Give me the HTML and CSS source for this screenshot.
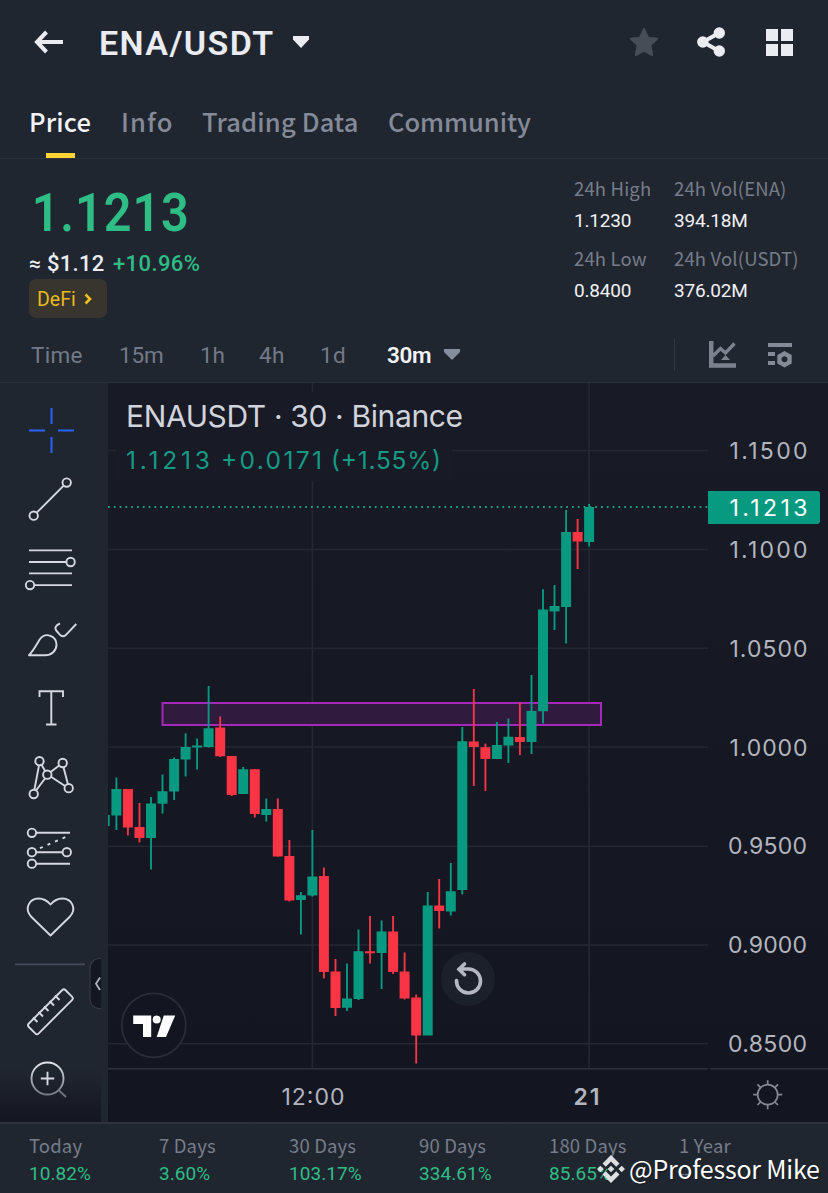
FILE: index.html
```html
<!DOCTYPE html>
<html lang="en">
<head>
<meta charset="utf-8">
<title>ENA/USDT</title>
<link rel="stylesheet" href="styles.css">
</head>
<body>
<div class="app">
  <header class="header">
    <svg class="back" width="30" height="24" viewBox="0 0 30 24"><path d="M12.500 2 3 12l9.500 10M3 12h26" fill="none" stroke="#eaecf2" stroke-width="4"/></svg>
    <h1 class="pair">ENA/USDT</h1>
    <svg class="caret" width="16" height="12" viewBox="0 0 16 12"><path d="M0 0h16v3.500L8 12 0 3.500z" fill="#eaecf2"/></svg>
    <div class="actions">
      <svg width="30" height="30" viewBox="0 0 30 30"><path d="M15 2l4 8.700 9 1-6.600 6.400 1.800 9.900L15 23.500 6.800 28l1.800-9.900L2 11.700l9-1z" fill="#474d57" stroke="#474d57" stroke-width="2" stroke-linejoin="round"/></svg>
      <svg width="28" height="30" viewBox="0 0 28 30"><path d="M22 6 6 15l16 9" fill="none" stroke="#eaecf2" stroke-width="4"/><circle cx="22.300" cy="6" r="5.700" fill="#eaecf2"/><circle cx="5.800" cy="15" r="5.700" fill="#eaecf2"/><circle cx="22.300" cy="24" r="5.700" fill="#eaecf2"/></svg>
      <svg width="27" height="27" viewBox="0 0 27 27"><path d="M0 0h12v12H0zM15 0h12v12H15zM0 15h12v12H0zM15 15h12v12H15z" fill="#eaecf2"/></svg>
    </div>
  </header>

  <nav class="tabs">
    <a class="tab tab-active">Price</a>
    <a class="tab tab-info">Info</a>
    <a class="tab tab-data">Trading Data</a>
    <a class="tab tab-community">Community</a>
  </nav>

  <section class="summary">
    <div class="quote">
      <div class="last-price">1.1213</div>
      <div class="fiat"><span class="approx">≈</span><span class="usd">$1.12</span><span class="change">+10.96%</span></div>
      <a class="tag">DeFi<svg width="8" height="12" viewBox="0 0 8 12"><path d="M1.500 1.500 6 6l-4.500 4.500" fill="none" stroke="#f0c020" stroke-width="2.600"/></svg></a>
    </div>
    <dl class="stats">
      <div><dt>24h High</dt><dd>1.1230</dd></div>
      <div><dt>24h Vol(ENA)</dt><dd>394.18M</dd></div>
      <div><dt>24h Low</dt><dd>0.8400</dd></div>
      <div><dt>24h Vol(USDT)</dt><dd>376.02M</dd></div>
    </dl>
  </section>

  <nav class="intervals">
    <span class="i-time">Time</span><span class="i-15m">15m</span><span class="i-1h">1h</span><span class="i-4h">4h</span><span class="i-1d">1d</span>
    <span class="i-30m">30m</span>
    <svg width="16" height="11" viewBox="0 0 16 11"><path d="M0 0h16v3L8 11 0 3z" fill="#848e9c"/></svg>
    <div class="chart-tools">
      <svg width="27" height="27" viewBox="0 0 27 27"><path d="M2.200 0v24.500H27" fill="none" stroke="#7c838f" stroke-width="4.500"/><path d="M4 15l7.500-7.500 5 4.500L25.500 2.500" fill="none" stroke="#7c838f" stroke-width="3.400"/><path d="M12 19h9l-4.500-5z" fill="#7c838f"/></svg>
      <svg width="24" height="26" viewBox="0 0 24 26"><path d="M0 1h24v4H0zM0 10h7v4H0zM0 19h7v4H0z" fill="#848b97"/><path fill-rule="evenodd" d="M16.500 9l7.200 4v8.500l-7.200 4-7.200-4V13zm0 5.200a3 3 0 1 0 .01 0z" fill="#848b97"/></svg>
    </div>
  </nav>

  <main class="workspace">
    <aside class="toolbar">
      <svg width="101" height="739" viewBox="0 383 101 739">
        <defs><linearGradient id="fade" x1="0" y1="0" x2="0" y2="1"><stop offset="0" stop-color="#202630"/><stop offset="1" stop-color="#141621"/></linearGradient>
        <linearGradient id="lens" x1="0" y1="0" x2="0" y2="1"><stop offset="0" stop-color="#e2e5ec"/><stop offset="1" stop-color="#777b86"/></linearGradient></defs>
        <rect y="1068" width="101" height="54" fill="url(#fade)"/>
        <path d="M51.500 408v16M51.500 437v16M29 430.500h16M58 430.500h16" stroke="#2962ff" stroke-width="2"/>
        <g fill="none" stroke="#d5d8e0" stroke-width="1.900">
          <circle cx="66.700" cy="482.600" r="4.200"/><circle cx="33.700" cy="515.700" r="4.200"/><path d="M63.700 485.600 36.700 512.700"/>
          <path d="M29 550.400h43M29 562h37.500M29 573.400h43M34 585.100h38"/><circle cx="70.600" cy="562" r="4.200"/><circle cx="30" cy="585.100" r="4.200"/>
          <path d="M29 655.200c5-5 7-10 10.500-15.500 6.500-9 17-3 17 5 0 6-5 10.500-11.500 10.500z" stroke-linejoin="round"/><path d="M60 623.500c-4.500 1.500-6 5-3 8l3.500 3.800q2.500 2 5 0L76.300 624"/>
          <path d="M39.500 697v-5.800h23.500v5.800M51.300 691.500v33M46 724.500h10.500"/>
          <circle cx="39.500" cy="761.200" r="4.200"/><circle cx="62.700" cy="763" r="4.200"/><circle cx="47.300" cy="774.700" r="4.200"/><circle cx="33.700" cy="794" r="4.200"/><circle cx="68.700" cy="788.200" r="4.200"/>
          <path d="M39 765.400l-4.600 24.400M41.700 765l3.400 6M50.600 772.100l8.600-6.500M63.500 767.200l4.400 16.800M51 776.800l14 9.200M45 778.500l-9 12"/>
          <circle cx="31.900" cy="832.800" r="4.200"/><circle cx="31.900" cy="852.200" r="4.200"/><circle cx="31.900" cy="863.700" r="4.200"/><circle cx="66.800" cy="852.200" r="4.200"/><path d="M36 832.800h34M36 852.200h26.500M36 863.700h34"/><path d="M40 848.200l27.500-12" stroke-dasharray="3 5.200"/>
          <path d="M50.500 935.500 31.500 917c-8-8.500-2-18.500 7-18.500 6 0 9 2.500 12 6 3-3.500 6-6 12-6 9 0 15 10 7 18.500z" stroke-linejoin="round"/>
          <rect x="-26" y="-7" width="52" height="14" rx="2.500" transform="translate(50.400 1011.800) rotate(-45)"/>
          <path d="M33 1017.500l4.500 4.500M38.500 1012l4.500 4.500M44 1006.500l4.500 4.500M49.500 1001l4.500 4.500M55 995.500l4.500 4.500" />
          <g stroke="url(#lens)"><circle cx="47.500" cy="1078.500" r="16"/></g><path d="M58.500 1090l7.500 7" stroke="#6f737e"/><path d="M40.800 1078.500h13.400M47.500 1071.800v13.400"/>
        </g>
        <path d="M15 964.400h70" stroke="#434a58" stroke-width="1.600"/>
        <path d="M102 958.500h-4q-8 2-8 10v30q0 8 8 10h4" fill="#141722" stroke="#343944" stroke-width="1.200"/>
        <path d="M100 977.500l-4 6.300 4 6.300" fill="none" stroke="#b2b5be" stroke-width="1.800"/>
      </svg>
    </aside>
    <div class="chart">
      <svg width="720" height="739" viewBox="108 383 720 739">
        <g stroke="#252833" stroke-width="1.600">
          <path d="M108 450.500h600M108 549.500h600M108 648.300h600M108 747h600M108 846.200h600M108 945h600M108 1043.800h600M312.400 383v685M589.100 383v685"/>
          <path d="M108 1068.700h600M710 1068.700h118" stroke="#2c303b"/>
        </g>
        <g fill="#181a25"><rect x="116" y="392" width="356" height="46"/><rect x="116" y="438" width="336" height="43"/></g>
        <path d="M108 507h600" stroke="#1f9c86" stroke-width="1.800" stroke-dasharray="1.800 4"/>
        <rect x="162.500" y="703" width="438.500" height="22" fill="#301b3f" stroke="#a428b9" stroke-width="2"/>
        <g stroke="#089981" stroke-width="1.900">
          <path d="M116.400 777.500V830M151 797v72.500M162.500 774.500v39M174.100 757.500V800M185.600 733.300v43.200M197.100 738.500v31M208.600 686v61.500M243.200 767v27M266.300 798.500v23M300.900 892v42.500M312.400 830v66.500M347 963.500v47.500M358.500 929.500v70.500M381.600 920.500V989M427.700 892v143M450.800 863v52.500M462.300 727v167.500M496.900 722v37M508.400 718.500V763M531.500 675v79M543 589.300v134.200M554.500 585v45M566.100 510v133.500M589.100 504v42.500"/>
        </g>
        <g stroke="#f23645" stroke-width="1.900">
          <path d="M127.900 789v46.500M139.500 803v39.500M220.200 716.500V757M231.700 756v40M254.800 769v48.500M277.800 798.500v58M289.400 840v61.500M323.900 867.500v111M335.500 959v57M370 916v47.500M393.100 916v58M404.600 952.500v47M416.200 994.500v69M439.200 879v49.500M473.800 689v97M485.400 743.500V791M519.900 702.500V755M577.600 519v50"/>
        </g>
        <g fill="#089981">
          <path d="M108 815h1.700v11H108zM111.400 789h10v26.500h-10zM146 803.500h10V838h-10zM157.500 791.300h10v12.400h-10zM169.100 759h10v32.500h-10zM180.600 747h10v12.500h-10zM192.100 745.600h10v1.900h-10zM203.600 728.300h10V747h-10zM238.200 769.300h10V794h-10zM261.300 809h10v6h-10zM295.900 895.300h10v4.700h-10zM307.400 876.500h10v19h-10zM342 998.500h10v9.300h-10zM353.500 951.300h10V999h-10zM376.600 931.500h10V953h-10zM422.700 905.500h10v130h-10zM445.800 891.300h10v20.200h-10zM457.300 741.300h10V890h-10zM491.900 745h10v14h-10zM503.400 736.700h10v8.800h-10zM526.500 711h10v31h-10zM538 609.500h10v101.800h-10zM549.500 606h10v5.500h-10zM561.100 532h10v75h-10zM584.100 507h10v35h-10z"/>
        </g>
        <g fill="#f93444">
          <path d="M122.900 789h10v38.500h-10zM134.500 827h10v11h-10zM215.200 727.500h10v28.800h-10zM226.700 756h10v39h-10zM249.800 769.300h10V814h-10zM272.800 809h10v47.500h-10zM284.400 856h10v44.500h-10zM318.900 876h10v96h-10zM330.500 971.500h10v36.500h-10zM365 951.300h10v1.900h-10zM388.100 931.500h10V972h-10zM399.600 971.500h10v27h-10zM411.200 997.500h10v38h-10zM434.200 905.500h10v5.500h-10zM468.800 741.500h10v5.500h-10zM480.400 747.300h10V759h-10zM514.900 737h10v5h-10zM572.600 532h10v9.500h-10z"/>
        </g>
        <g class="tv-text">
          <text x="126" y="427" class="symbol" textLength="337">ENAUSDT · 30 · Binance</text>
          <g class="delta"><text x="126" y="468.500" textLength="84">1.1213</text><text x="221" y="468.500" textLength="101">+0.0171</text><text x="331" y="468.500" textLength="110">(+1.55%)</text></g>
          <g class="ticks">
            <text x="729.500" y="458.500" textLength="78">1.1500</text><text x="729.500" y="557.500" textLength="78">1.1000</text><text x="729.500" y="656.500" textLength="78">1.0500</text><text x="729.500" y="755.500" textLength="78">1.0000</text><text x="728" y="854" textLength="79">0.9500</text><text x="728" y="953" textLength="79">0.9000</text><text x="728" y="1052" textLength="79">0.8500</text>
            <text x="281.500" y="1105" textLength="63">12:00</text><text x="573.500" y="1105" class="day">21</text>
          </g>
          <path d="M708 491h109q3 0 3 3v27q0 3-3 3H708z" fill="#089981"/>
          <text x="729.500" y="515.500" class="current" textLength="78">1.1213</text>
        </g>
        <circle cx="153.800" cy="1025.300" r="32" fill="#131521" stroke="#2a2e39" stroke-width="1.700"/>
        <path d="M133.200 1015.500h18V1037h-8.200v-13h-9.800zM163.800 1015.500h11.400L166 1037h-9.300z" fill="#fff"/><circle cx="156.700" cy="1019.500" r="4" fill="#fff"/>
        <circle cx="468" cy="979" r="27" fill="#1c202a"/>
        <path d="M456.500 980.500a12 12 0 1 0 11.500-11.500H459M464.500 964l-5.500 5.200 5.500 5.500" fill="none" stroke="#b5b8c3" stroke-width="3.600" stroke-linecap="round"/>
        <g fill="none" stroke="#858892" stroke-width="1.700"><circle cx="767.700" cy="1094.700" r="10"/><path d="M767.700 1084.700v-4.500M767.700 1104.700v4.500M757.700 1094.700h-4.500M777.700 1094.700h4.500M760.600 1087.600l-3.200-3.200M774.800 1087.600l3.200-3.200M760.600 1101.800l-3.200 3.200M774.800 1101.800l3.200 3.200"/></g>
      </svg>
    </div>
  </main>

  <footer class="performance">
    <div><span>Today</span><b>10.82%</b></div>
    <div><span>7 Days</span><b>3.60%</b></div>
    <div><span>30 Days</span><b>103.17%</b></div>
    <div><span>90 Days</span><b>334.61%</b></div>
    <div><span>180 Days</span><b>85.65%</b></div>
    <div><span>1 Year</span><b class="none">--</b></div>
    <div class="credit">
      <svg width="28" height="28" viewBox="0 0 28 28" fill="#dedfe1"><path d="M14 0l8.500 8.500-3.300 3.300L14 6.600l-5.200 5.200-3.300-3.300zM14 28l8.500-8.500-3.300-3.300-5.200 5.200-5.200-5.200-3.300 3.300zM14 10.700l3.300 3.300-3.300 3.300-3.300-3.300zM3.300 10.700L6.600 14l-3.300 3.300L0 14zM24.700 10.700L28 14l-3.300 3.300-3.300-3.300z"/></svg>
      <span>@Professor Mike</span>
    </div>
  </footer>
</div>
</body>
</html>
```

FILE: styles.css
```css
* { box-sizing: border-box; }
body { margin: 0; background: #202630; color: #eaecf2; font-family: "Noto Sans CJK SC", "Open Sans", sans-serif; }
svg { display: block; flex: none; }
.app { width: 828px; height: 1193px; overflow: hidden; display: flex; flex-direction: column; }

.header { height: 86px; padding: 0 35px 2px 34px; display: flex; align-items: center; }
.pair { margin: 0 0 0 35px; padding-top: 2px; width: 194px; font: 600 34px/40px Roboto, sans-serif; letter-spacing: 1.4px; white-space: nowrap; }
.caret { margin-top: -1px; }
.actions { margin-left: auto; display: flex; align-items: center; gap: 38px; }
.actions svg:last-child { margin-left: 3px; }

.tabs { height: 73px; padding-left: 29px; display: flex; border-bottom: 1px solid #2b313c; }
.tab { height: 72px; line-height: 70px; font-size: 25.500px; font-weight: 500; color: #848a97; white-space: nowrap; letter-spacing: .15px; }
.tab-active { width: 92px; color: #f2f3f7; background: linear-gradient(#fcd535, #fcd535) 17px 100% / 29px 5px no-repeat; }
.tab-info { width: 81px; letter-spacing: 1.1px; }
.tab-data { width: 186px; }
.tab-community { letter-spacing: -.05px; }

.summary { height: 170px; display: flex; justify-content: space-between; padding-left: 29px; }
.quote { font-family: Roboto, sans-serif; }
.last-price { height: 86px; padding: 22px 0 0 3px; font-size: 54px; line-height: 64px; font-weight: 600; color: #2ebd85; transform: scaleX(.9); transform-origin: 0 0; letter-spacing: 1px; }
.fiat { height: 34px; display: flex; align-items: center; font-size: 22px; font-weight: 500; line-height: 34px; padding-top: 4px; }
.approx { width: 18px; font-size: 21px; }
.usd { width: 66px; letter-spacing: .3px; }
.change { color: #2ebd85; letter-spacing: .4px; }
.tag { width: 78px; height: 39px; padding: 1px 8px 0; display: flex; align-items: center; gap: 8px; border-radius: 7px; background: #37352e; color: #e9b91c; font-size: 19.500px; }
.stats { margin: 0; padding-top: 16px; width: 254px; display: grid; grid-template-columns: 100px 154px; grid-auto-rows: 70px; }
.stats dt { font-size: 18.500px; line-height: 26px; color: #767d89; white-space: nowrap; letter-spacing: .15px; }
.stats dd { margin: 7px 0 0; font: 19px/26px Roboto, sans-serif; letter-spacing: -.2px; color: #f0f1f5; }

.intervals { height: 54px; border-bottom: 1px solid #2b313c; display: flex; align-items: center; padding: 0 36px 2px 31px; font-family: Roboto, sans-serif; font-size: 22.500px; color: #737a87; letter-spacing: .3px; }
.i-time { width: 88px; }
.i-15m { width: 81px; letter-spacing: -.1px; }
.i-1h { width: 59px; letter-spacing: -.2px; }
.i-4h { width: 61px; }
.i-1d { width: 67px; }
.i-30m { width: 57px; color: #f2f3f7; font-weight: 600; letter-spacing: -.3px; }
.chart-tools { margin-left: auto; height: 32px; padding-left: 34px; border-left: 1px solid #323844; display: flex; align-items: center; gap: 32px; }

.workspace { height: 739px; display: flex; gap: 7px; }
.toolbar { width: 101px; }
.chart { width: 720px; background: linear-gradient(#181a25, #131521); }
.tv-text { font-family: Inter, sans-serif; }
.symbol { font-size: 30px; fill: #d1d4dc; }
.delta { font-size: 24.500px; fill: #159a83; }
.ticks { font-size: 23px; fill: #b2b5be; }
.day { font-weight: 600; letter-spacing: 1.8px; }
.current { font-size: 23px; fill: #fff; }

.performance { position: relative; height: 71px; border-top: 2px solid #2c333e; padding: 8px 0 0 29px; display: grid; grid-template-columns: repeat(6, 130px); line-height: 26px; }
.performance div > span { display: block; font-size: 18.500px; color: #767d89; white-space: nowrap; letter-spacing: .15px; }
.performance b { display: block; margin-top: 3px; font: 400 19px/26px Roboto, sans-serif; color: #2ebd85; letter-spacing: .05px; }
.performance .none { color: #767d89; }
.performance .credit { position: absolute; left: 597px; top: 28px; display: flex; align-items: center; gap: 4px; height: 34px; }
.performance .credit span { margin-top: -2px; font-size: 25px; letter-spacing: -.22px; color: #fff; text-shadow: 1px 1px 1px rgba(0,0,0,.4); }
```
